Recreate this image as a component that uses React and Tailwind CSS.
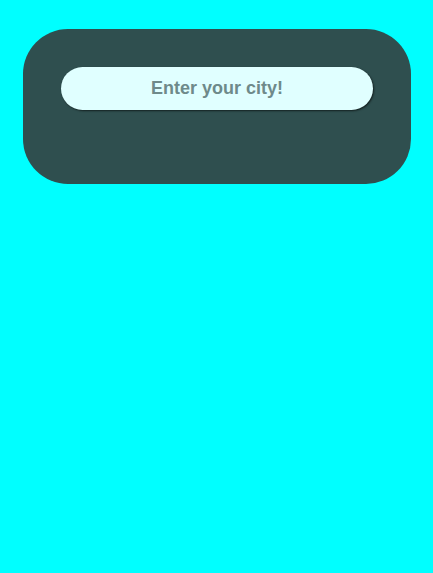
export default function App() {
  return (
    <div className="min-h-[573px] w-full bg-[#00ffff] pt-[29px] px-[23px] font-['Liberation_Sans',Arial,sans-serif]">
      <div className="flex w-[388px] h-[155px] items-start rounded-[45px] bg-[#2f4f4f] px-[38px] pt-[38px]">
        <input
          type="text"
          placeholder="Enter your city!"
          className="w-[313px] h-[43px] rounded-full bg-[#e0ffff] text-center text-[18px] font-bold font-['Liberation_Sans',Arial,sans-serif] text-[#2f4f4f] placeholder:text-[#6e8a8a] outline-none shadow-[1px_1px_2px_rgba(0,0,0,0.6)]"
        />
      </div>
    </div>
  );
}
